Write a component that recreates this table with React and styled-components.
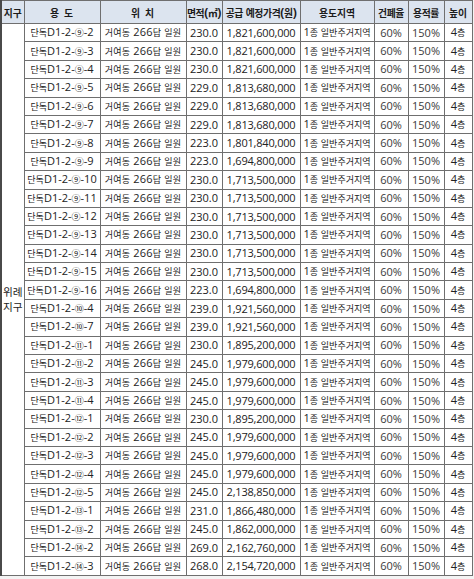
import React from 'react'
import styled, { createGlobalStyle } from 'styled-components'

const GlobalStyle = createGlobalStyle`
    html, body {
        margin: 0;
        padding: 0;
        background: #fff;
    }
    body {
        font-family: "Open Sans", "Noto Sans CJK KR", sans-serif;
    }
`

const rows = [
    ['⑨-2', '230.0', '1,821,600,000'],
    ['⑨-3', '230.0', '1,821,600,000'],
    ['⑨-4', '230.0', '1,821,600,000'],
    ['⑨-5', '229.0', '1,813,680,000'],
    ['⑨-6', '229.0', '1,813,680,000'],
    ['⑨-7', '229.0', '1,813,680,000'],
    ['⑨-8', '223.0', '1,801,840,000'],
    ['⑨-9', '223.0', '1,694,800,000'],
    ['⑨-10', '230.0', '1,713,500,000'],
    ['⑨-11', '230.0', '1,713,500,000'],
    ['⑨-12', '230.0', '1,713,500,000'],
    ['⑨-13', '230.0', '1,713,500,000'],
    ['⑨-14', '230.0', '1,713,500,000'],
    ['⑨-15', '230.0', '1,713,500,000'],
    ['⑨-16', '223.0', '1,694,800,000'],
    ['⑩-4', '239.0', '1,921,560,000'],
    ['⑩-7', '239.0', '1,921,560,000'],
    ['⑪-1', '230.0', '1,895,200,000'],
    ['⑪-2', '245.0', '1,979,600,000'],
    ['⑪-3', '245.0', '1,979,600,000'],
    ['⑪-4', '245.0', '1,979,600,000'],
    ['⑫-1', '230.0', '1,895,200,000'],
    ['⑫-2', '245.0', '1,979,600,000'],
    ['⑫-3', '245.0', '1,979,600,000'],
    ['⑫-4', '245.0', '1,979,600,000'],
    ['⑫-5', '245.0', '2,138,850,000'],
    ['⑬-1', '231.0', '1,866,480,000'],
    ['⑬-2', '245.0', '1,862,000,000'],
    ['⑭-2', '269.0', '2,162,760,000'],
    ['⑭-3', '268.0', '2,154,720,000'],
]

const columns = [23, 76, 86, 36, 78, 74, 34, 36, 28]

// hangul glyphs in the source are drawn smaller than the latin digits
const splitText = text =>
    text.split(/([\uAC00-\uD7A3\u2460-\u24FF\u33A1]+)/).map((part, i) =>
        /[\uAC00-\uD7A3\u2460-\u24FF\u33A1]/.test(part)
            ? <Ko key={i}>{part}</Ko>
            : part
    )

function App() {
    return (
        <>
            <GlobalStyle />
            <Page>
                <Table>
                    <colgroup>
                        {columns.map((w, i) => <col key={i} style={{ width: w }} />)}
                    </colgroup>
                    <thead>
                        <tr>
                            <Th>{splitText('지구')}</Th>
                            <Th $spacing={1}>{splitText('용 도')}</Th>
                            <Th $spacing={1}>{splitText('위 치')}</Th>
                            <Th $spacing={-0.4}>{splitText('면적(㎡)')}</Th>
                            <Th $spacing={-0.4}>{splitText('공급 예정가격(원)')}</Th>
                            <Th>{splitText('용도지역')}</Th>
                            <Th $spacing={-0.4}>{splitText('건폐율')}</Th>
                            <Th $spacing={-0.4}>{splitText('용적률')}</Th>
                            <Th>{splitText('높이')}</Th>
                        </tr>
                    </thead>
                    <tbody>
                        {rows.map(([lot, area, price], i) => (
                            <tr key={lot}>
                                {i === 0 && (
                                    <District rowSpan={rows.length}>
                                        {splitText('위례')}<br />{splitText('지구')}
                                    </District>
                                )}
                                <Td $spacing={lot.length > 4 ? -0.3 : 0}>{splitText('단독D1-2-' + lot)}</Td>
                                <Td $spacing={0.2}>{splitText('거여동 266답 일원')}</Td>
                                <Td>{area}</Td>
                                <Td $spacing={-0.2}>{price}</Td>
                                <Td>{splitText('1종 일반주거지역')}</Td>
                                <Td $muted>60%</Td>
                                <Td $muted>150%</Td>
                                <Td>{splitText('4층')}</Td>
                            </tr>
                        ))}
                    </tbody>
                </Table>
            </Page>
        </>
    )
}

const Page = styled.div`
    width: 474px;
    height: 579px;
    overflow: hidden;
    background: #f4f4f4;
`

const Table = styled.table`
    width: 471px;
    border-collapse: collapse;
    table-layout: fixed;
    background: #fff;
    border-left: 2px solid #4a4a4a;
    border-right: 1px solid #8a8a8a;
    border-bottom: 1px solid #7a7a7a;
    font-size: 11px;
    color: #222;
`

const Ko = styled.span`
    font-family: "Noto Sans CJK KR", sans-serif;
    font-size: 0.82em;
`

const Th = styled.th`
    height: 22px;
    padding: 0;
    background: #dce4ef;
    border: 1px solid #6f6f6f;
    font-weight: 700;
    font-size: 12px;
    color: #1c1c1c;
    text-align: center;
    white-space: nowrap;
    overflow: hidden;
    letter-spacing: ${p => p.$spacing || 0}px;
`

const Td = styled.td`
    height: 17.4px;
    padding: 0;
    border: 1px solid #6f6f6f;
    text-align: center;
    white-space: nowrap;
    overflow: hidden;
    line-height: 16px;
    color: ${p => (p.$muted ? '#3a3a3a' : '#222')};
    letter-spacing: ${p => p.$spacing || 0}px;
`

const District = styled.td`
    padding: 0;
    border: 1px solid #6f6f6f;
    text-align: center;
    vertical-align: middle;
    font-size: 13px;
    line-height: 15px;
    color: #222;
`

export default App
